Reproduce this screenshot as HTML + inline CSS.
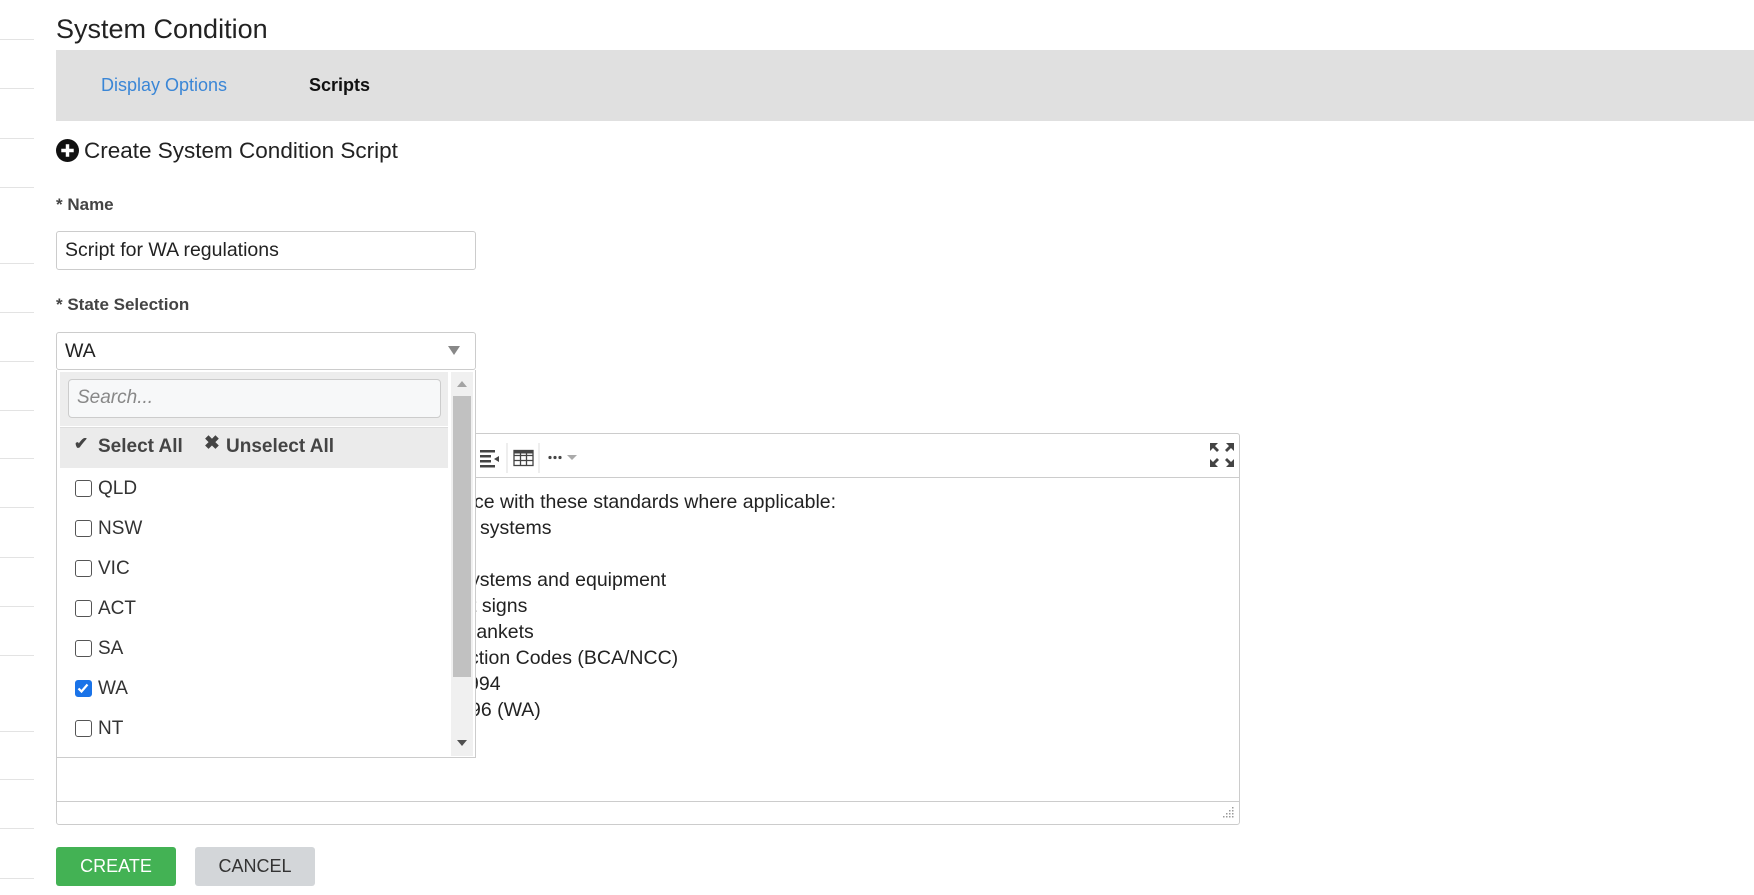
<!DOCTYPE html>
<html><head><meta charset="utf-8">
<style>
*{box-sizing:border-box;margin:0;padding:0}
body{width:1754px;height:895px;background:#fff;font-family:"Liberation Sans",sans-serif;position:relative;overflow:hidden;color:#222}
.a{position:absolute;white-space:nowrap}
.sl{position:absolute;left:0;width:34px;height:1px;background:#e3e3e3}
.cb{position:absolute;left:75px;width:17px;height:17px;border:1.5px solid #555;border-radius:3px;background:#fff}
.lbl{position:absolute;left:98px;font-size:19px;color:#333;line-height:20px}
.et{position:absolute;font-size:19.5px;color:#222;line-height:22px;white-space:nowrap}
</style></head><body>
<div class="sl" style="top:39px"></div><div class="sl" style="top:88px"></div><div class="sl" style="top:138px"></div><div class="sl" style="top:187px"></div><div class="sl" style="top:263px"></div><div class="sl" style="top:312px"></div><div class="sl" style="top:361px"></div><div class="sl" style="top:410px"></div><div class="sl" style="top:458px"></div><div class="sl" style="top:507px"></div><div class="sl" style="top:557px"></div><div class="sl" style="top:606px"></div><div class="sl" style="top:655px"></div><div class="sl" style="top:731px"></div><div class="sl" style="top:779px"></div><div class="sl" style="top:828px"></div><div class="sl" style="top:878px"></div>

<div class="a" style="left:56px;top:14px;font-size:27px;color:#222">System Condition</div>
<div class="a" style="left:56px;top:50px;width:1698px;height:71px;background:#e0e0e0"></div>
<div class="a" style="left:101px;top:75px;font-size:18px;color:#3a86d6">Display Options</div>
<div class="a" style="left:309px;top:75px;font-size:18px;font-weight:bold;color:#111">Scripts</div>

<svg class="a" style="left:56px;top:139px" width="23" height="23" viewBox="0 0 24 24"><circle cx="12" cy="12" r="12" fill="#111"/><path d="M12 5.5v13M5.5 12h13" stroke="#fff" stroke-width="3.6"/></svg>
<div class="a" style="left:84px;top:138px;font-size:22.5px;color:#222">Create System Condition Script</div>

<div class="a" style="left:56px;top:195px;font-size:17px;font-weight:bold;color:#444">* Name</div>
<div class="a" style="left:56px;top:231px;width:420px;height:39px;border:1px solid #ccc;border-radius:3px"></div>
<div class="a" style="left:65px;top:239px;font-size:19.5px;color:#222">Script for WA regulations</div>

<div class="a" style="left:56px;top:295px;font-size:17px;font-weight:bold;color:#444">* State Selection</div>
<div class="a" style="left:56px;top:332px;width:420px;height:38px;border:1px solid #ccc;border-radius:3px"></div>
<div class="a" style="left:65px;top:340px;font-size:19.5px;color:#222">WA</div>
<div class="a" style="left:448px;top:346px;width:0;height:0;border-left:6px solid transparent;border-right:6px solid transparent;border-top:9px solid #888"></div>

<div class="a" style="left:56px;top:433px;width:1184px;height:392px;border:1px solid #ccc;border-radius:3px"></div>
<div class="a" style="left:57px;top:477px;width:1182px;height:1px;background:#ccc"></div>
<div class="a" style="left:57px;top:801px;width:1182px;height:1px;background:#ccc"></div>
<svg class="a" style="left:478px;top:443px" width="130" height="30" viewBox="0 0 130 30">
<g fill="#444"><rect x="2" y="7" width="15" height="2.5"/><rect x="2" y="12" width="11" height="2.5"/><rect x="2" y="17" width="11" height="2.5"/><rect x="2" y="22" width="15" height="2.5"/><path d="M21 13l-5 3 5 3z"/></g>
<line x1="29" y1="0" x2="29" y2="30" stroke="#ddd"/>
<g fill="none" stroke="#444" stroke-width="1.3"><rect x="36" y="7.5" width="19" height="15"/><path d="M36 12.5h19M36 17.5h19M42.5 7.5v15M48.5 7.5v15"/></g>
<rect x="36" y="7.5" width="19" height="3" fill="#444"/>
<line x1="61" y1="0" x2="61" y2="30" stroke="#ddd"/>
<g fill="#444"><circle cx="72" cy="14.5" r="1.6"/><circle cx="77" cy="14.5" r="1.6"/><circle cx="82" cy="14.5" r="1.6"/></g>
<path d="M89 12l5 5 5-5z" fill="#aaa"/>
</svg>
<svg class="a" style="left:1209px;top:442px" width="26" height="26" viewBox="0 0 26 26" fill="#444">
<path d="M1 1h8l-3 3 4 4-2 2-4-4-3 3z"/><path d="M25 1h-8l3 3-4 4 2 2 4-4 3 3z"/><path d="M1 25h8l-3-3 4-4-2-2-4 4-3-3z"/><path d="M25 25h-8l3-3-4-4 2-2 4 4 3-3z"/>
</svg>
<svg class="a" style="left:1221px;top:805px" width="14" height="14"><g fill="#999"><rect x="11" y="2" width="1.5" height="1.5"/><rect x="8" y="5" width="1.5" height="1.5"/><rect x="11" y="5" width="1.5" height="1.5"/><rect x="5" y="8" width="1.5" height="1.5"/><rect x="8" y="8" width="1.5" height="1.5"/><rect x="11" y="8" width="1.5" height="1.5"/><rect x="2" y="11" width="1.5" height="1.5"/><rect x="5" y="11" width="1.5" height="1.5"/><rect x="8" y="11" width="1.5" height="1.5"/><rect x="11" y="11" width="1.5" height="1.5"/></g></svg>

<div class="et" style="left:474px;top:491px">ce with these standards where applicable:</div>
<div class="et" style="left:480px;top:517px">systems</div>
<div class="et" style="left:470px;top:569px">ystems and equipment</div>
<div class="et" style="left:471px;top:595px">t signs</div>
<div class="et" style="left:472px;top:621px">lankets</div>
<div class="et" style="left:469px;top:647px">ction Codes (BCA/NCC)</div>
<div class="et" style="left:468px;top:673px">994</div>
<div class="et" style="left:470px;top:699px">96 (WA)</div>

<div class="a" style="left:56px;top:370px;width:420px;height:388px;background:#fff;border:1px solid #ccc;border-top:none"></div>
<div class="a" style="left:60px;top:372px;width:388px;height:54px;background:#ededed"></div>
<div class="a" style="left:68px;top:379px;width:373px;height:39px;background:#f7f8f9;border:1px solid #ccc;border-radius:4px"></div>
<div class="a" style="left:77px;top:387px;font-size:19px;font-style:italic;color:#888">Search...</div>
<div class="a" style="left:60px;top:427px;width:388px;height:1px;background:#ddd"></div>
<div class="a" style="left:60px;top:428px;width:388px;height:40px;background:#ebebeb"></div>
<div class="a" style="left:74px;top:434px;font-size:17px;font-weight:bold;color:#444">✔</div>
<div class="a" style="left:98px;top:436px;font-size:19px;font-weight:bold;color:#444">Select All</div>
<div class="a" style="left:204px;top:432px;font-size:19px;font-weight:bold;color:#444">✖</div>
<div class="a" style="left:226px;top:436px;font-size:19px;font-weight:bold;color:#444">Unselect All</div>
<div class="a" style="left:451px;top:372px;width:22px;height:384px;background:#f0f0f0"></div>
<div class="a" style="left:453px;top:396px;width:18px;height:281px;background:#c1c1c1"></div>
<div class="a" style="left:457px;top:381px;width:0;height:0;border-left:5px solid transparent;border-right:5px solid transparent;border-bottom:6px solid #a3a3a3"></div>
<div class="a" style="left:457px;top:740px;width:0;height:0;border-left:5px solid transparent;border-right:5px solid transparent;border-top:6px solid #505050"></div>

<div class="cb" style="top:480px"></div><div class="lbl" style="top:479px">QLD</div>
<div class="cb" style="top:520px"></div><div class="lbl" style="top:519px">NSW</div>
<div class="cb" style="top:560px"></div><div class="lbl" style="top:559px">VIC</div>
<div class="cb" style="top:600px"></div><div class="lbl" style="top:599px">ACT</div>
<div class="cb" style="top:640px"></div><div class="lbl" style="top:639px">SA</div>
<div class="cb" style="top:680px;background:#1a73e8;border-color:#1a73e8"><svg width="14" height="14" viewBox="0 0 14 14" style="position:absolute;left:0;top:0"><path d="M2.5 7.5l3 3 6-7" stroke="#fff" stroke-width="2.2" fill="none"/></svg></div><div class="lbl" style="top:679px">WA</div>
<div class="cb" style="top:720px"></div><div class="lbl" style="top:719px">NT</div>

<div class="a" style="left:56px;top:847px;width:120px;height:39px;background:#43b254;border-radius:3px;color:#fff;font-size:18px;text-align:center;line-height:39px">CREATE</div>
<div class="a" style="left:195px;top:847px;width:120px;height:39px;background:#d3d6d9;border-radius:3px;color:#333;font-size:18px;text-align:center;line-height:39px">CANCEL</div>
</body></html>
